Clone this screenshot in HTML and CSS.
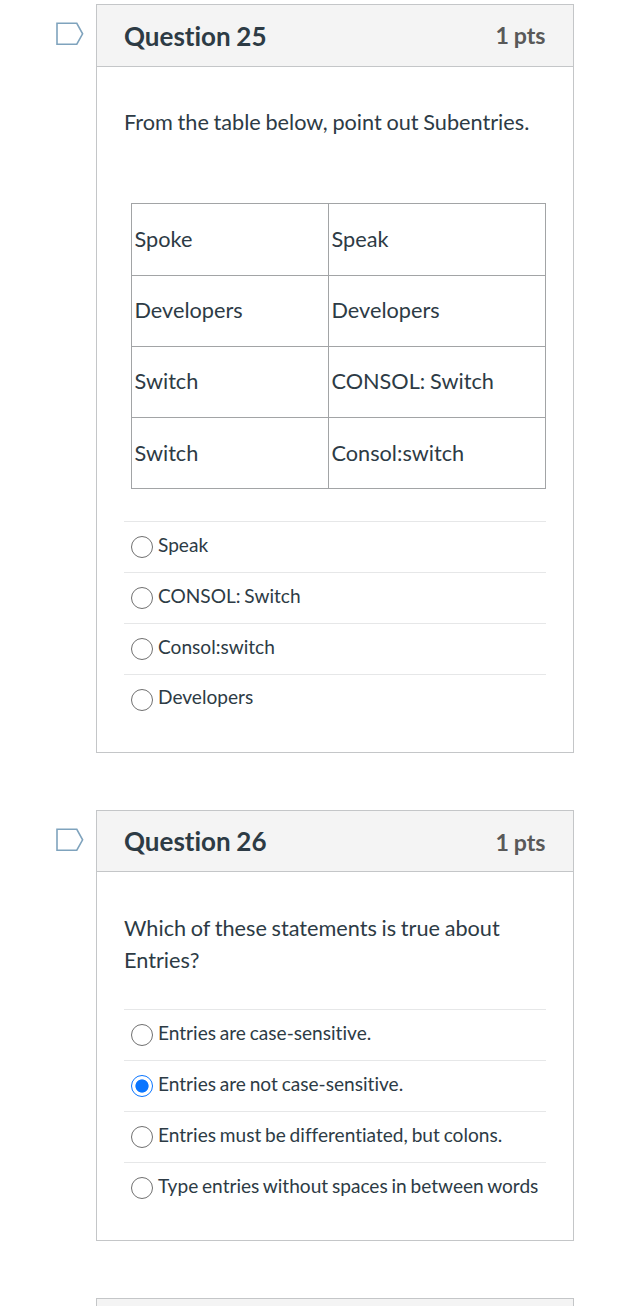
FILE: index.html
```html
<!DOCTYPE html>
<html lang="en">
<head>
<meta charset="utf-8">
<title>Quiz</title>
<link rel="stylesheet" href="styles.css">
</head>
<body>
<main class="quiz">
  <section class="row">
    <svg class="flag" width="29" height="24" viewBox="0 0 29 24"><path d="M2 1.3H21.8L27.6 11.8L21.8 22.2H2Z"/></svg>
    <article class="card card-table">
      <header class="head"><h2 class="title">Question 25</h2><span class="points">1 pts</span></header>
      <div class="body">
        <p class="prompt">From the table below, point out Subentries.</p>
        <table class="entries">
          <tr class="top"><td class="first">Spoke</td><td>Speak</td></tr>
          <tr><td class="first">Developers</td><td>Developers</td></tr>
          <tr><td class="first">Switch</td><td>CONSOL: Switch</td></tr>
          <tr class="last"><td class="first">Switch</td><td>Consol:switch</td></tr>
        </table>
        <div class="answers">
          <label class="answer"><input class="radio" type="radio" name="q25"><span class="text">Speak</span></label>
          <label class="answer"><input class="radio" type="radio" name="q25"><span class="text">CONSOL: Switch</span></label>
          <label class="answer"><input class="radio" type="radio" name="q25"><span class="text">Consol:switch</span></label>
          <label class="answer"><input class="radio" type="radio" name="q25"><span class="text">Developers</span></label>
        </div>
      </div>
    </article>
  </section>
  <section class="row">
    <svg class="flag" width="29" height="24" viewBox="0 0 29 24"><path d="M2 1.3H21.8L27.6 11.8L21.8 22.2H2Z"/></svg>
    <article class="card card-statements">
      <header class="head"><h2 class="title">Question 26</h2><span class="points">1 pts</span></header>
      <div class="body">
        <p class="prompt">Which of these statements is true about Entries?</p>
        <div class="answers">
          <label class="answer"><input class="radio" type="radio" name="q26"><span class="text">Entries are case-sensitive.</span></label>
          <label class="answer"><input class="radio" type="radio" name="q26" checked><span class="text">Entries are not case-sensitive.</span></label>
          <label class="answer"><input class="radio" type="radio" name="q26"><span class="text">Entries must be differentiated, but colons.</span></label>
          <label class="answer"><input class="radio" type="radio" name="q26"><span class="text">Type entries without spaces in between words</span></label>
        </div>
      </div>
    </article>
  </section>
  <section class="row">
    <article class="card card-next"><header class="head"></header></article>
  </section>
</main>
</body>
</html>
```
FILE: styles.css
```css
* { box-sizing: border-box; }
body { margin: 0; background: #fff; color: #2d3b45; font-family: Lato, sans-serif; font-variant-ligatures: none; }
.quiz { display: flex; flex-direction: column; gap: 57px; height: 1306px; padding: 4px 57px 0 55px; overflow: hidden; }
.row { display: flex; justify-content: flex-end; flex: none; }
.flag { flex: none; margin: 18px 12px 0 0; fill: #fff; stroke: #7fa3bd; stroke-width: 1.6; }
.card { width: 478px; flex: none; border: 1px solid #c4c6c8; background: #fff; }
.card-table { height: 749px; }
.card-statements { height: 431px; }
.card-next { height: 62px; }
.head { display: flex; justify-content: space-between; align-items: center; height: 62px; padding: 0 27.5px 0 27px; background: #f4f4f4; border-bottom: 1px solid #c4c6c8; }
.card-statements .head { height: 61px; }
.title { margin: 0; font-size: 26px; line-height: 32px; font-weight: 700; white-space: nowrap; word-spacing: -0.7px; }
.points { margin-top: -1px; font-size: 23.2px; line-height: 32px; font-weight: 700; color: #595959; white-space: nowrap; word-spacing: -0.8px; }
.card-statements .points { margin-top: 2px; }
.body { padding: 39px 27px 0; }
.prompt { margin: 0; font-size: 21.7px; line-height: 32px; word-spacing: -0.9px; }
.card-statements .body { padding-top: 40px; }
.entries { width: 415px; height: 286px; margin: 65px 0 0 7px; border-collapse: collapse; table-layout: fixed; font-size: 21.7px; line-height: 32px; word-spacing: -0.8px; }
.entries td { height: 71px; padding: 0 2.5px 2px; border: 1px solid #a2a4a6; vertical-align: middle; }
.entries .top td { height: 72px; }
.entries .last td { padding-bottom: 0; }
.entries .first { width: 197px; }
.answers { margin-top: 32px; }
.card-statements .answers { margin-top: 33px; }
.answer { display: flex; align-items: flex-start; gap: 5px; height: 51px; padding: 0 0 0 7px; border-top: 1px solid #e6e7e8; }
.radio { appearance: none; flex: none; width: 22px; height: 22px; margin: 14px 0 0; border: 1.5px solid #707070; border-radius: 50%; background: #fff; }
.radio:checked { border-color: #0a75ff; background: radial-gradient(circle, #0a75ff 6.2px, #fff 7px); }
.text { margin-top: 10px; font-size: 19.1px; line-height: 26px; white-space: nowrap; word-spacing: -1.1px; }
.card-table .answer:last-child .text { margin-top: 9px; }
```
